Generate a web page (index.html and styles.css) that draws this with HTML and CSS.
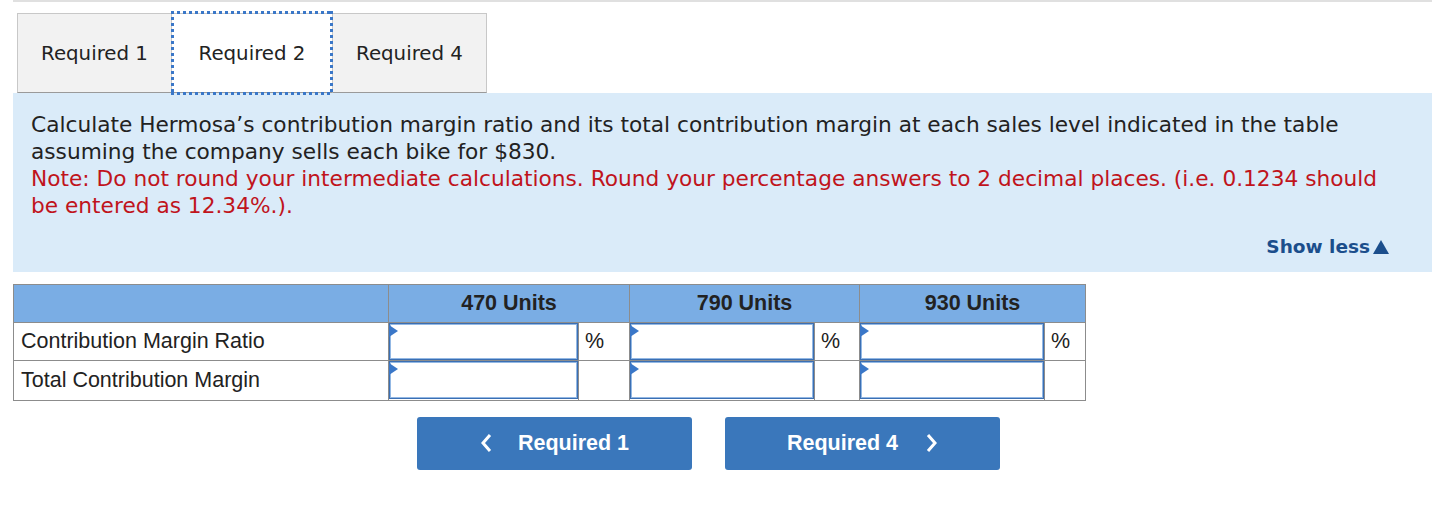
FILE: index.html
```html
<!DOCTYPE html>
<html>
<head>
<meta charset="utf-8">
<link rel="stylesheet" href="styles.css">
</head>
<body>
<div class="page">
  <div class="topline"></div>
  <div class="tabs">
    <div class="tab">Required 1</div>
    <div class="tab active">Required 2</div>
    <div class="tab">Required 4</div>
  </div>
  <div class="panel">
    <p class="question">Calculate Hermosa’s contribution margin ratio and its total contribution margin at each sales level indicated in the table assuming the company sells each bike for $830.<br><span class="note">Note: Do not round your intermediate calculations. Round your percentage answers to 2 decimal places. (i.e. 0.1234 should be entered as 12.34%.).</span></p>
    <div class="showless">Show less<span class="tri"></span></div>
  </div>
  <table class="grid">
    <colgroup>
      <col class="c-label">
      <col class="c-in1"><col class="c-p1">
      <col class="c-in2"><col class="c-p2">
      <col class="c-in3"><col class="c-p3">
    </colgroup>
    <tr class="head">
      <th></th>
      <th colspan="2">470 Units</th>
      <th colspan="2">790 Units</th>
      <th colspan="2">930 Units</th>
    </tr>
    <tr class="r1">
      <td class="label">Contribution Margin Ratio</td>
      <td class="in"><div class="box"></div></td><td class="pct">%</td>
      <td class="in"><div class="box"></div></td><td class="pct">%</td>
      <td class="in"><div class="box"></div></td><td class="pct">%</td>
    </tr>
    <tr class="r2">
      <td class="label">Total Contribution Margin</td>
      <td class="in"><div class="box"></div></td><td class="pct"></td>
      <td class="in"><div class="box"></div></td><td class="pct"></td>
      <td class="in"><div class="box"></div></td><td class="pct"></td>
    </tr>
  </table>
  <div class="nav">
    <div class="btn prev">
      <svg class="chev" width="14" height="22" viewBox="0 0 14 22"><path d="M10 3 L3 11 L10 19" fill="none" stroke="#fff" stroke-width="3"/></svg>
      <span>Required 1</span>
    </div>
    <div class="btn next">
      <span>Required 4</span>
      <svg class="chev" width="14" height="22" viewBox="0 0 14 22"><path d="M4 3 L11 11 L4 19" fill="none" stroke="#fff" stroke-width="3"/></svg>
    </div>
  </div>
</div>
</body>
</html>
```

FILE: styles.css
```css
html, body {
  margin: 0;
  padding: 0;
  background: #ffffff;
}

.page {
  padding-left: 13px;
  width: 1419px;
}

.topline {
  height: 2px;
  background: #e0e0e0;
}

.tabs {
  display: flex;
  margin-top: 11px;
  margin-left: 4px;
  font-family: "DejaVu Sans", Verdana, sans-serif;
  font-size: 19.8px;
  color: #222222;
}

.tab {
  box-sizing: border-box;
  height: 80px;
  width: 155px;
  display: flex;
  align-items: center;
  justify-content: center;
  background: #f2f2f2;
  border: 1px solid #c8c8c8;
  border-bottom: 1px solid #9a9a9a;
}

.tab.active {
  position: relative;
  width: 160px;
  background: #ffffff;
  border-left: none;
  border-right: none;
}

.tab.active::after {
  content: "";
  position: absolute;
  left: -1px;
  right: -1px;
  top: -3px;
  bottom: -3px;
  background:
    repeating-linear-gradient(90deg, #3a77c8 0 3px, transparent 3px 6px) left top / 100% 3px no-repeat,
    repeating-linear-gradient(90deg, #3a77c8 0 3px, transparent 3px 6px) left bottom / 100% 3px no-repeat,
    repeating-linear-gradient(180deg, #3a77c8 0 3px, transparent 3px 6px) left top / 3px 100% no-repeat,
    repeating-linear-gradient(180deg, #3a77c8 0 3px, transparent 3px 6px) right top / 3px 100% no-repeat;
}

.panel {
  box-sizing: border-box;
  height: 179px;
  background: #daebf9;
  padding: 18px 43px 0 18px;
  font-family: "DejaVu Sans", Verdana, sans-serif;
}

.question {
  margin: 0;
  font-size: 21.7px;
  line-height: 27px;
  color: #222222;
}

.note {
  color: #c0141c;
}

.showless {
  margin-top: 16px;
  display: flex;
  justify-content: flex-end;
  align-items: center;
  gap: 3px;
  font-size: 18.5px;
  line-height: 24px;
  font-weight: bold;
  color: #1b4e8c;
}

.showless .tri {
  width: 0;
  height: 0;
  border-left: 8px solid transparent;
  border-right: 8px solid transparent;
  border-bottom: 14px solid #1b4e8c;
}

.grid {
  margin-top: 12px;
  border-collapse: collapse;
  table-layout: fixed;
  width: 1072px;
  font-family: "Liberation Sans", Arial, sans-serif;
  font-size: 21.5px;
  color: #222222;
}

.c-label { width: 375px; }
.c-in1 { width: 190px; }
.c-p1 { width: 51px; }
.c-in2 { width: 185px; }
.c-p2 { width: 45px; }
.c-in3 { width: 185px; }
.c-p3 { width: 41px; }

.grid th,
.grid td {
  border: 1px solid #8c8c8c;
  padding: 0;
}

.grid .head th {
  background: #7aade4;
  height: 37px;
  font-weight: bold;
  text-align: center;
}

.grid .r1 td { height: 37px; }
.grid .r2 td { height: 39px; }

.grid .label {
  padding-left: 7px;
}

.grid .pct {
  padding-left: 6px;
}

.grid .in {
  vertical-align: top;
}

.box {
  position: relative;
  box-sizing: border-box;
  height: 37px;
  border: 1px solid #3b6fb3;
  box-shadow: inset 0 0 0 1px #93b8e4;
  background: #ffffff;
}

.r2 .box {
  height: 38px;
}

.box::before {
  content: "";
  position: absolute;
  left: -1px;
  top: 1px;
  width: 0;
  height: 0;
  border-top: 6px solid transparent;
  border-bottom: 6px solid transparent;
  border-left: 9px solid #3a77c8;
}

.nav {
  display: flex;
  gap: 33px;
  margin-top: 16px;
  margin-left: 404px;
}

.btn {
  box-sizing: border-box;
  width: 275px;
  height: 53px;
  background: #3a77bb;
  border-radius: 3px;
  display: flex;
  align-items: center;
  justify-content: center;
  gap: 24px;
  color: #ffffff;
  font-family: "Liberation Sans", Arial, sans-serif;
  font-size: 21.5px;
  font-weight: bold;
  line-height: 24px;
  padding-bottom: 1px;
}

.btn.next {
  gap: 26px;
}

.chev {
  display: block;
}
```
